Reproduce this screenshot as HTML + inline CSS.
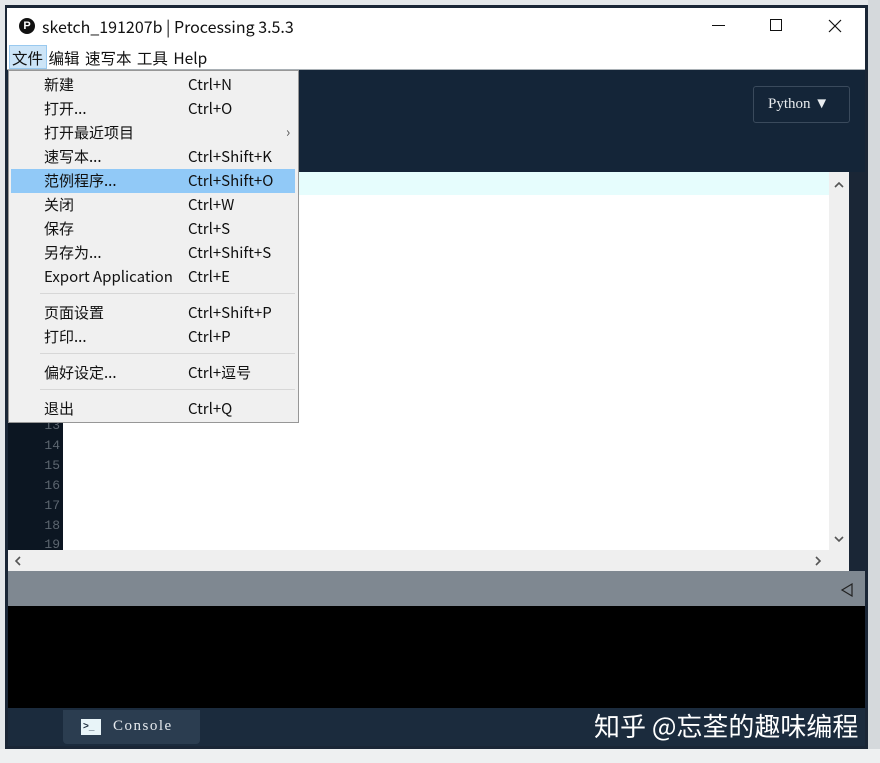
<!DOCTYPE html>
<html><head><meta charset="utf-8"><style>
*{margin:0;padding:0;box-sizing:border-box}
body{width:880px;height:763px;background:#e4e7ea;position:relative;overflow:hidden;font-family:"Noto Sans CJK SC","Liberation Sans",sans-serif}
.a{position:absolute}
.mi{position:absolute;left:44px;font-size:15px;color:#111;line-height:20px}
.sc{position:absolute;left:188px;font-size:15px;color:#111;line-height:20px}
.ln{position:absolute;left:8px;width:52px;text-align:right;font-family:"Liberation Mono",monospace;font-size:13px;color:#5d6670}
</style></head><body>
<div class="a" style="left:5px;top:5px;width:863px;height:744px;background:#1a2636"></div>
<div class="a" style="left:868px;top:0;width:12px;height:763px;background:#d5d9dc"></div>
<div class="a" style="left:0;top:749px;width:880px;height:14px;background:#eef0f1"></div>
<!-- title -->
<div class="a" style="left:7px;top:8px;width:858px;height:37px;background:#fff"></div>
<div class="a" style="left:19px;top:18px;width:16px;height:16px;border-radius:50%;background:#111;color:#fff;font-size:11px;font-weight:bold;text-align:center;line-height:16px;font-family:'Liberation Sans',sans-serif">P</div>
<div class="a" style="left:42px;top:14px;font-size:16px;color:#111;line-height:24px">sketch_191207b | Processing 3.5.3</div>
<div class="a" style="left:712px;top:25px;width:13px;height:1px;background:#111"></div>
<div class="a" style="left:770px;top:19px;width:12px;height:12px;border:1px solid #111"></div>
<svg class="a" style="left:828px;top:19px" width="14" height="14"><path d="M1 1L13 13M13 1L1 13" stroke="#111" stroke-width="1.2"/></svg>
<!-- menubar -->
<div class="a" style="left:7px;top:45px;width:858px;height:25px;background:#fff;border-bottom:1px solid #a9b0b5"></div>
<div class="a" style="left:9px;top:45px;width:38px;height:24px;background:#cce4f7;border:1px solid #99c9ef"></div>
<div class="a" style="left:12px;top:47px;font-size:15.5px;color:#111;word-spacing:2px;line-height:22px">文件 编辑 速写本 工具 Help</div>
<!-- header -->
<div class="a" style="left:7px;top:70px;width:858px;height:102px;background:#142538"></div>
<div class="a" style="left:753px;top:86px;width:97px;height:37px;border:1px solid #3a4a5c;border-radius:3px;color:#e8ecef;font-family:'Liberation Serif',serif;font-size:15px;padding:9px 0 0 14px">Python ▼</div>
<!-- editor -->
<div class="a" style="left:8px;top:172px;width:55px;height:378px;background:#0c1622"></div>
<div class="a" style="left:63px;top:172px;width:766px;height:378px;background:#fff"></div>
<div class="a" style="left:63px;top:172px;width:766px;height:23px;background:#e6fdfd"></div>
<div class="a" style="left:829px;top:172px;width:20px;height:378px;background:#efefef"></div>
<svg class="a" style="left:833px;top:180px" width="12" height="10"><path d="M2 7L6 3L10 7" stroke="#555" stroke-width="1.6" fill="none"/></svg>
<svg class="a" style="left:833px;top:534px" width="12" height="10"><path d="M2 3L6 7L10 3" stroke="#555" stroke-width="1.6" fill="none"/></svg>
<div class="ln" style="top:418px">13</div><div class="ln" style="top:438px">14</div><div class="ln" style="top:458px">15</div><div class="ln" style="top:478px">16</div><div class="ln" style="top:498px">17</div><div class="ln" style="top:518px">18</div><div class="ln" style="top:537px">19</div>
<div class="a" style="left:8px;top:550px;width:841px;height:21px;background:#efefef"></div>
<svg class="a" style="left:13px;top:555px" width="10" height="12"><path d="M7 2L3 6L7 10" stroke="#555" stroke-width="1.6" fill="none"/></svg>
<svg class="a" style="left:813px;top:555px" width="10" height="12"><path d="M3 2L7 6L3 10" stroke="#555" stroke-width="1.6" fill="none"/></svg>
<!-- gray bar -->
<div class="a" style="left:8px;top:571px;width:857px;height:35px;background:#7f8891"></div>
<svg class="a" style="left:840px;top:583px" width="14" height="14"><path d="M12 1L2 7L12 13Z" stroke="#222" stroke-width="1.2" fill="none"/></svg>
<div class="a" style="left:8px;top:606px;width:857px;height:102px;background:#000"></div>
<div class="a" style="left:8px;top:708px;width:857px;height:38px;background:#1b2b3d"></div>
<div class="a" style="left:63px;top:710px;width:137px;height:34px;background:#2b3d50;border-radius:0 0 4px 4px"></div>
<div class="a" style="left:81px;top:719px;width:20px;height:16px;background:#e8f4f8;color:#1b2b3d;font-size:10px;font-weight:bold;line-height:16px;padding-left:2px;font-family:'Liberation Sans',sans-serif">&gt;_</div>
<div class="a" style="left:113px;top:718px;font-family:'Liberation Serif',serif;font-size:15px;color:#e6eaee;letter-spacing:1.5px">Console</div>
<div class="a" style="left:594px;top:708px;font-size:26px;color:#fff;line-height:36px">知乎 @忘荃的趣味编程</div>
<!-- menu -->
<div class="a" style="left:8px;top:70px;width:291px;height:353px;background:#f0f0f0;border:1px solid #979797"></div>
<div class="a" style="left:11px;top:169px;width:284px;height:24px;background:#91c9f7"></div>
<div class="a" style="left:40px;top:293px;width:255px;height:1px;background:#d7d7d7"></div>
<div class="a" style="left:40px;top:353px;width:255px;height:1px;background:#d7d7d7"></div>
<div class="a" style="left:40px;top:389px;width:255px;height:1px;background:#d7d7d7"></div>
<div class="mi" style="top:75px">新建</div><div class="sc" style="top:75px">Ctrl+N</div>
<div class="mi" style="top:99px">打开...</div><div class="sc" style="top:99px">Ctrl+O</div>
<div class="mi" style="top:123px">打开最近项目</div><div class="a" style="left:286px;top:122px;font-size:14px;color:#555">›</div>
<div class="mi" style="top:147px">速写本...</div><div class="sc" style="top:147px">Ctrl+Shift+K</div>
<div class="mi" style="top:171px">范例程序...</div><div class="sc" style="top:171px">Ctrl+Shift+O</div>
<div class="mi" style="top:195px">关闭</div><div class="sc" style="top:195px">Ctrl+W</div>
<div class="mi" style="top:219px">保存</div><div class="sc" style="top:219px">Ctrl+S</div>
<div class="mi" style="top:243px">另存为...</div><div class="sc" style="top:243px">Ctrl+Shift+S</div>
<div class="mi" style="top:267px">Export Application</div><div class="sc" style="top:267px">Ctrl+E</div>
<div class="mi" style="top:303px">页面设置</div><div class="sc" style="top:303px">Ctrl+Shift+P</div>
<div class="mi" style="top:327px">打印...</div><div class="sc" style="top:327px">Ctrl+P</div>
<div class="mi" style="top:363px">偏好设定...</div><div class="sc" style="top:363px">Ctrl+逗号</div>
<div class="mi" style="top:399px">退出</div><div class="sc" style="top:399px">Ctrl+Q</div>
</body></html>
